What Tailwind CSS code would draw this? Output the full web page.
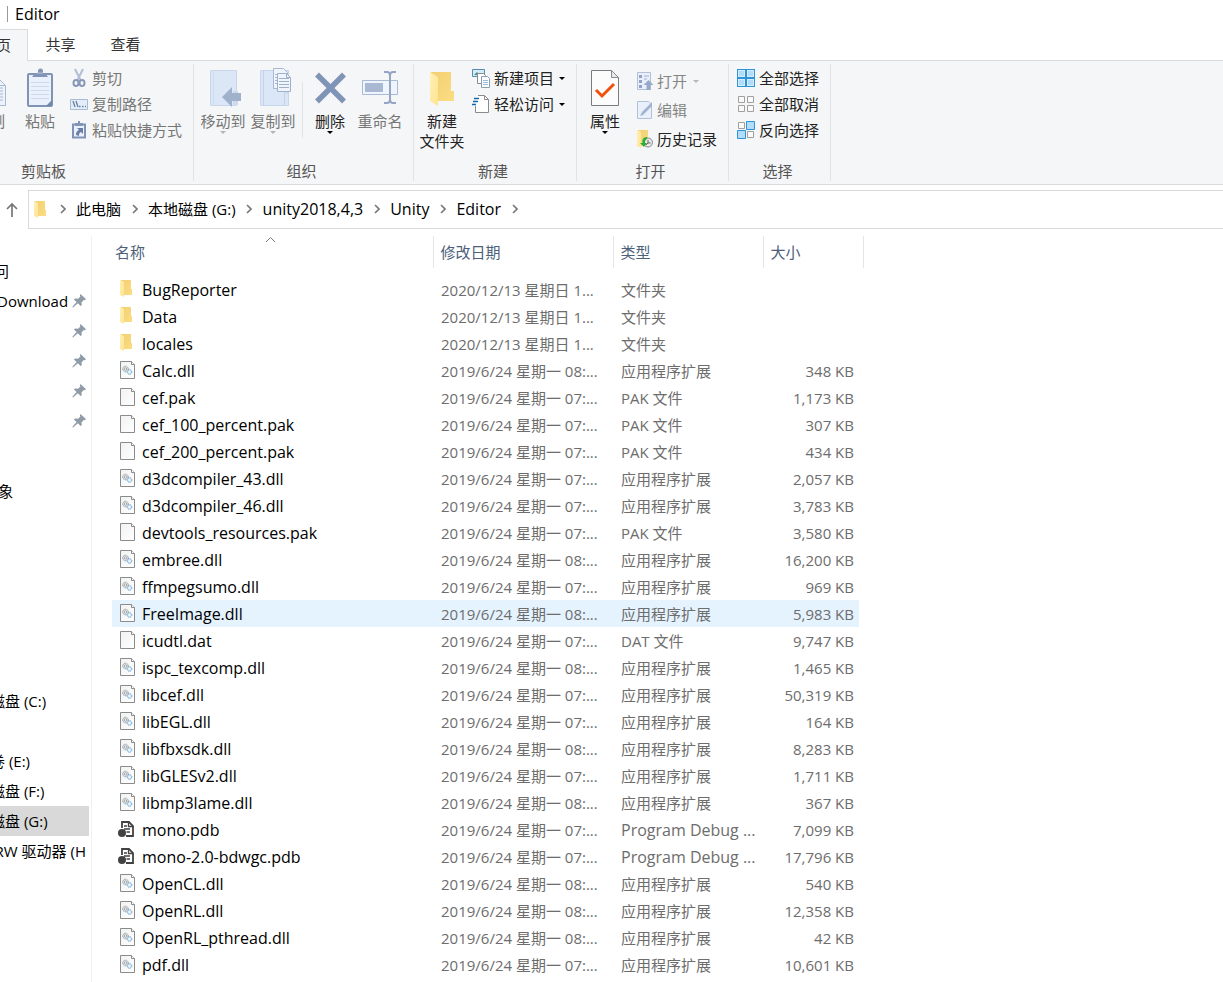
<!DOCTYPE html>
<html lang="zh-CN">

<head>
    <meta charset="UTF-8">
    <meta name="viewport" content="width=device-width, initial-scale=1.0">
    <title>Editor</title>
    <script src="https://cdn.jsdelivr.net/npm/@tailwindcss/browser@4"></script>
</head>

<body class="bg-white text-black text-[15px] leading-5 font-['Open_Sans','Noto_Sans_CJK_SC',sans-serif] overflow-hidden">

    <!-- icons -->
    <svg class="absolute w-0 h-0" aria-hidden="true">
        <defs>
            <linearGradient id="gold" x1="0" x2="1" y1="0" y2="1">
                <stop offset="0" stop-color="#f3cf72" />
                <stop offset="1" stop-color="#fbdd83" />
            </linearGradient>
            <linearGradient id="flap" x1="0" x2="1" y1="0" y2="1">
                <stop offset="0" stop-color="#fff0b8" />
                <stop offset="1" stop-color="#ffe38f" />
            </linearGradient>
            <linearGradient id="paper" x1="0" x2="1" y1="0" y2="1">
                <stop offset="0" stop-color="#f1f2f2" />
                <stop offset="1" stop-color="#ffffff" />
            </linearGradient>
        </defs>
        <symbol id="folder" viewBox="0 0 12 17">
            <path d="M1 0h10v9h1v6H3z" fill="url(#gold)" />
            <path d="M0 0l4 2v15l-4-2z" fill="url(#flap)" />
        </symbol>
        <symbol id="file" viewBox="0 0 15 18">
            <path d="M.5.5h11l3 3v14H.5z" fill="url(#paper)" stroke="#8b8b8b" />
            <path d="M11.500 .5v3h3" fill="#fff" stroke="#8b8b8b" />
        </symbol>
        <symbol id="dll" viewBox="0 0 15 18">
            <path d="M.5.5h11l3 3v14H.5z" fill="url(#paper)" stroke="#8b8b8b" />
            <path d="M11.500 .5v3h3" fill="#fff" stroke="#8b8b8b" />
            <circle cx="5.500" cy="8" r="2.800" fill="#e4e6e8" stroke="#8f979d" stroke-dasharray="1.200 .6" />
            <circle cx="5.500" cy="8" r="1.200" fill="#fff" stroke="#8f979d" stroke-width=".8" />
            <circle cx="9.500" cy="11" r="2.300" fill="#d5eafa" stroke="#6fa3cf" stroke-dasharray="1.200 .5" />
            <circle cx="9.500" cy="11" r=".8" fill="#fff" />
        </symbol>
        <symbol id="pdb" viewBox="0 0 16 16">
            <path d="M4 7V1h7l4 4v10H8" fill="#fff" stroke="#424242" stroke-width="1.800" />
            <path d="M10.500 1v4.500H15M6 5h3M6 8h6M8.500 11h3.500" fill="none" stroke="#424242" stroke-width="1.300" />
            <circle cx="4" cy="12" r="4" fill="#424242" />
        </symbol>
        <symbol id="pin" viewBox="0 0 14 14">
            <path d="M8.500 0L14 5.200l-1.300 1-1-.2-2.200 2.400.3 2.700-1.200 1-2.700-2.800L1 13.600l-.8-.7 4.400-4.800L1.900 5.500l1.200-1 3 .2 2.300-2.300-.5-1.200z" fill="#8f9ba6" />
        </symbol>
        <symbol id="chevron" viewBox="0 0 6 10">
            <path d="M1 1l4 4-4 4" fill="none" stroke="#777" stroke-width="1.600" />
        </symbol>
        <symbol id="caret" viewBox="0 0 6 3">
            <path d="M0 0h6L3 3z" fill="currentColor" />
        </symbol>
    </svg>

    <div class="min-h-screen flex flex-col">
        <!-- title -->
        <header class="h-[29px] pb-0.5 flex items-center gap-[7px] pl-[7px] whitespace-nowrap">
            <span class="w-px h-4 bg-[#999]"></span>
            <h1 class="text-base">Editor</h1>
        </header>

        <!-- tabs -->
        <nav class="h-8 flex border-b border-[#dadbdc] text-[#333]">
            <button type="button" class="w-[68px] h-8 -ml-10 pr-4 pb-0.5 border border-b-0 border-[#dadbdc] bg-[#f5f6f7] text-right shrink-0">主页</button>
            <button type="button" class="w-[65px] pb-0.5 text-center">共享</button>
            <button type="button" class="w-[65px] pb-0.5 text-center">查看</button>
        </nav>

        <!-- ribbon -->
        <div class="h-[124px] flex py-[3px] bg-[#f5f6f7] border-b border-[#dadbdc] text-[#222] whitespace-nowrap overflow-hidden">
            <section class="w-[300px] -ml-[106px] shrink-0 flex flex-col border-r border-[#e2e3e4]">
                <div class="flex-1 flex justify-end pr-[11px] text-[#767676]">
                    <button type="button" class="w-[50px] flex flex-col items-center">
                        <svg class="w-8 h-[47px]" viewBox="0 0 32 47">
                            <path d="M2 9h16v23H2z" fill="#eef3fb" stroke="#a9b8d2" />
                            <path d="M14.500 15.500h11l6 6v20h-17z" fill="#eef3fb" stroke="#a9b8d2" />
                            <path d="M25.500 15.500v6h6M17 24h12M17 27h12M17 30h12M17 33h12M17 36h12" fill="none" stroke="#a9b8d2" />
                        </svg>
                        <span>复制</span>
                    </button>
                    <button type="button" class="w-[50px] flex flex-col items-center">
                        <svg class="w-[26px] h-[47px]" viewBox="0 0 26 47">
                            <rect x="1" y="10" width="24" height="32" rx="1" fill="#eaf1fc" stroke="#8193b5" stroke-width="2" />
                            <path d="M19 42h6V36z" fill="#7387ae" />
                            <path d="M4 18.500h18M4 22.500h18M4 26.500h18M4 30.500h18M4 34.500h18" stroke="#ccd9ee" />
                            <path d="M5 13l3-4h3V7a2.500 2.500 0 0 1 5 0v2h2l3 4z" fill="#8395b7" />
                            <path d="M10 9h6" stroke="#b8c5db" />
                        </svg>
                        <span>粘贴</span>
                    </button>
                    <div class="ml-[5px] pt-1 flex flex-col gap-1.5 text-left">
                        <button type="button" class="flex items-center gap-1">
                            <svg class="w-[18px] h-5" viewBox="0 0 18 20">
                                <path d="M5 1l6 12M13 1L7 13" fill="none" stroke="#b0bfd6" stroke-width="2" />
                                <ellipse cx="6" cy="15" rx="2.500" ry="3" fill="none" stroke="#8899b8" stroke-width="2" />
                                <ellipse cx="12" cy="15" rx="2.500" ry="3" fill="none" stroke="#8899b8" stroke-width="2" />
                            </svg>
                            剪切
                        </button>
                        <button type="button" class="flex items-center gap-1">
                            <svg class="w-[18px] h-5" viewBox="0 0 18 20">
                                <path d="M.5 5.500h17v10H.5z" fill="#e4edfa" stroke="#a9bad4" />
                                <path d="M3 7l2 6M6 7l2 6" stroke="#6b7fa6" stroke-width="1.300" />
                                <path d="M9 12.500h1.500M12 12.500h1.500M15 12.500h1" stroke="#6b7fa6" stroke-width="1.500" />
                            </svg>
                            复制路径
                        </button>
                        <button type="button" class="flex items-center gap-1">
                            <svg class="w-[18px] h-5" viewBox="0 0 18 20">
                                <path d="M3 4.500h12v13H3z" fill="#eaf1fc" stroke="#8193b5" stroke-width="2" />
                                <path d="M5 6V3h3V1h2v2h3v3z" fill="#8395b7" />
                                <path d="M7 8h6v6l-2-2c-2 1-2 2-2 4l-3-1c0-3 1-4 3-5z" fill="#6b7fa6" />
                            </svg>
                            粘贴快捷方式
                        </button>
                    </div>
                </div>
                <h2 class="text-center text-[#555]">剪贴板</h2>
            </section>

            <section class="w-[220px] shrink-0 flex flex-col border-r border-[#e2e3e4]">
                <div class="flex-1 flex pl-1 text-[#767676]">
                    <button type="button" class="w-[50px] flex flex-col items-center">
                        <svg class="w-9 h-[47px]" viewBox="0 0 36 47">
                            <path d="M5.500 6.500h26v35h-26z" fill="#dbe6f6" stroke="#c8d6ec" />
                            <path d="M8.500 7v34" stroke="#cfdcf0" />
                            <path d="M28 27h5v14h-5z" fill="#cedaee" />
                            <path d="M17 33l10-10v6h10v8H27v6z" fill="#a0b1cc" />
                        </svg>
                        <span>移动到</span>
                        <svg class="w-1.5 h-[3px] text-[#b5b5b5]"><use href="#caret" /></svg>
                    </button>
                    <button type="button" class="w-[50px] flex flex-col items-center">
                        <svg class="w-9 h-[47px]" viewBox="0 0 36 47">
                            <path d="M5.500 6.500h28v35h-28z" fill="#dbe6f6" stroke="#c8d6ec" />
                            <path d="M8.500 7v34M29.500 41V29h4" fill="none" stroke="#c3d1e8" />
                            <path d="M18.500 4.500h10l4 4v16h-14z" fill="#f0f5fd" stroke="#a9b8d2" />
                            <path d="M20 10.500h8M20 13.500h8M20 16.500h8M20 19.500h3" stroke="#a9b8d2" />
                            <path d="M22.500 9.500h9l4 4v14h-13z" fill="#f0f5fd" stroke="#9fb0cb" />
                            <path d="M24 14.500h10M24 17.500h10M24 20.500h10M24 23.500h10M31.500 9.500v4h4" fill="none" stroke="#9fb0cb" />
                        </svg>
                        <span>复制到</span>
                        <svg class="w-1.5 h-[3px] text-[#b5b5b5]"><use href="#caret" /></svg>
                    </button>
                    <span class="w-px h-14 mt-[18px] ml-1 mr-0.5 bg-[#e2e3e4]"></span>
                    <button type="button" class="w-[50px] flex flex-col items-center text-[#222]">
                        <svg class="w-8 h-[47px]" viewBox="0 0 32 47">
                            <path d="M3 10.500l27 27M30 10.500l-27 27" stroke="#8094b8" stroke-width="5.500" />
                        </svg>
                        <span>删除</span>
                        <svg class="w-1.5 h-[3px] text-black"><use href="#caret" /></svg>
                    </button>
                    <button type="button" class="w-[50px] flex flex-col items-center">
                        <svg class="w-9 h-[47px]" viewBox="0 0 36 47">
                            <path d="M.5 16.500h35v14H.5z" fill="#f0f5fd" stroke="#a9bad4" />
                            <path d="M3 19h18v9H3z" fill="#a9b9d4" />
                            <path d="M22 8h3q3 0 3 4v23q0 4-3 4h-3M34 8h-3q-3 0-3 4v23q0 4 3 4h3" fill="none" stroke="#94a6c4" stroke-width="2" />
                        </svg>
                        <span>重命名</span>
                    </button>
                </div>
                <h2 class="text-center text-[#555] pr-1">组织</h2>
            </section>

            <section class="w-[163px] shrink-0 flex flex-col border-r border-[#e2e3e4]">
                <div class="flex-1 flex pl-[3px]">
                    <button type="button" class="w-[50px] flex flex-col items-center">
                        <svg class="w-6 h-[47px]" viewBox="0 0 24 47">
                            <path d="M1 8h20v19h3v10H7z" fill="url(#gold)" />
                            <path d="M0 8l8 5v29l-8-5z" fill="url(#flap)" />
                        </svg>
                        <span>新建<br>文件夹</span>
                    </button>
                    <div class="ml-[5px] pt-1 flex flex-col gap-1.5 self-start">
                        <button type="button" class="flex items-center gap-1">
                            <svg class="w-[18px] h-5" viewBox="0 0 18 20">
                                <path d="M.5 1.500h12v7H.5z" fill="#d4ebfa" stroke="#588caf" />
                                <path d="M2 7l3-3 3 3z" fill="#4e9177" />
                                <path d="M5.500 5.500h6l2 2v8h-8z" fill="#fff" stroke="#8b8b8b" />
                                <path d="M9.500 8.500h6l2 2v9h-8z" fill="#fff" stroke="#8b9db0" />
                                <path d="M11 12.500h5M11 14.500h5M11 16.500h5" stroke="#93bce0" />
                            </svg>
                            新建项目
                            <svg class="w-1.5 h-[3px] ml-px text-black"><use href="#caret" /></svg>
                        </button>
                        <button type="button" class="flex items-center gap-1">
                            <svg class="w-[18px] h-5" viewBox="0 0 18 20">
                                <path d="M4.500 1.500h8l4 4v13h-13V8z" fill="#fff" />
                                <path d="M6 1.500h6.500l4 4v13h-13V12M12.500 1.500v4h4" fill="none" stroke="#8b8b8b" />
                                <path d="M2 4.500h5M1 7.500h5M0 10.500h4" stroke="#1764b0" stroke-width="1.400" />
                            </svg>
                            轻松访问
                            <svg class="w-1.5 h-[3px] ml-px text-black"><use href="#caret" /></svg>
                        </button>
                    </div>
                </div>
                <h2 class="text-center text-[#555] pr-1">新建</h2>
            </section>

            <section class="w-[152px] shrink-0 flex flex-col border-r border-[#e2e3e4]">
                <div class="flex-1 flex pl-[3px]">
                    <button type="button" class="w-[50px] flex flex-col items-center">
                        <svg class="w-7 h-[47px]" viewBox="0 0 28 47">
                            <path d="M.5 6.500h20l7 7v28H.5z" fill="#fcfcfc" stroke="#7b7b7b" />
                            <path d="M20.500 6.500v7h7z" fill="#e9e9e9" stroke="#8b8b8b" />
                            <path d="M5 26l6 6 12-12" fill="none" stroke="#f1500d" stroke-width="3" />
                        </svg>
                        <span>属性</span>
                        <svg class="w-1.5 h-[3px] text-black"><use href="#caret" /></svg>
                    </button>
                    <div class="ml-[7px] pt-[7px] flex flex-col gap-[9px] self-start">
                        <button type="button" class="flex items-center gap-1 text-[#858585]">
                            <svg class="w-4 h-5" viewBox="0 0 16 20">
                                <path d="M.5 1.500h13v17H.5z" fill="#e9f0fb" stroke="#b2c1da" />
                                <path d="M2 4h3v3H2zM2 9h3v3H2zM2 14h3v3H2z" fill="#8fa3c5" />
                                <path d="M7 5h5M7 8h3" stroke="#9fb0cb" />
                                <path d="M11.500 9l5 5h-3v5h-4v-5h-3z" fill="#97a9c8" />
                            </svg>
                            打开
                            <svg class="w-1.5 h-[3px] ml-0.5 text-[#b5b5b5]"><use href="#caret" /></svg>
                        </button>
                        <button type="button" class="flex items-center gap-1 text-[#858585]">
                            <svg class="w-4 h-5" viewBox="0 0 16 20">
                                <path d="M.5 1.500h11l3 3v14H.5z" fill="#e9f0fb" stroke="#b2c1da" />
                                <path d="M3 16l2-4L15 2v4L6 15z" fill="#a2b3d0" />
                            </svg>
                            编辑
                        </button>
                        <button type="button" class="flex items-center gap-1">
                            <svg class="w-4 h-5" viewBox="0 0 16 20">
                                <path d="M1 1h10v16H3z" fill="url(#gold)" />
                                <path d="M0 1l4 2v16l-4-2z" fill="url(#flap)" />
                                <circle cx="11" cy="13.500" r="4.500" fill="#e8e8e8" stroke="#8a8a8a" />
                                <path d="M11 11v3h2.500M11 14l-2 2" fill="none" stroke="#666" />
                                <path d="M10 8c-4 0-5 3-4.500 6H3l4 4 3-4H8c0-2 0-3 2-4z" fill="#2fae35" />
                            </svg>
                            历史记录
                        </button>
                    </div>
                </div>
                <h2 class="text-center text-[#555] pr-1">打开</h2>
            </section>

            <section class="w-[102px] shrink-0 flex flex-col border-r border-[#e2e3e4]">
                <div class="flex-1 flex pl-2">
                    <div class="pt-1 flex flex-col gap-1.5 self-start">
                        <button type="button" class="flex items-center gap-1">
                            <svg class="w-[18px] h-5" viewBox="0 0 18 20">
                                <path d="M0 1h18v18H0z" fill="#2e94da" />
                                <path d="M1 2h7v7H1zM10 2h7v7h-7zM1 11h7v7H1zM10 11h7v7h-7z" fill="#d5ecfb" />
                                <path d="M2 3h5v5H2zM11 3h5v5h-5zM2 12h5v5H2zM11 12h5v5h-5z" fill="#b3dcf9" />
                            </svg>
                            全部选择
                        </button>
                        <button type="button" class="flex items-center gap-1">
                            <svg class="w-[18px] h-5" viewBox="0 0 18 20">
                                <path d="M1.500 2.500h6v6h-6zM10.500 2.500h6v6h-6zM1.500 11.500h6v6h-6zM10.500 11.500h6v6h-6z" fill="#fafafa" stroke="#a0a0a0" />
                            </svg>
                            全部取消
                        </button>
                        <button type="button" class="flex items-center gap-1">
                            <svg class="w-[18px] h-5" viewBox="0 0 18 20">
                                <path d="M1.500 2.500h6v6h-6zM10.500 11.500h6v6h-6z" fill="#fafafa" stroke="#a0a0a0" />
                                <path d="M9.500 1.500h8v8h-8zM.5 10.500h8v8h-8z" fill="#b3dcf9" stroke="#2e94da" />
                            </svg>
                            反向选择
                        </button>
                    </div>
                </div>
                <h2 class="text-center text-[#555] pr-1">选择</h2>
            </section>
        </div>

        <!-- address bar -->
        <div class="h-11 pt-[5px] flex items-center">
            <button type="button" aria-label="向上" class="w-7 pl-1.5">
                <svg class="w-3 h-4" viewBox="0 0 12 16">
                    <path d="M6 15V2M1 7l5-5 5 5" fill="none" stroke="#777" stroke-width="1.700" />
                </svg>
            </button>
            <nav id="path" class="flex-1 h-[39px] pl-[5px] pb-px flex items-center border border-r-0 border-[#d9d9d9] whitespace-nowrap">
                <svg class="w-3 h-[17px] mr-[3px]"><use href="#folder" /></svg>
            </nav>
        </div>

        <main class="flex-1 flex pt-[7px]">
            <!-- tree -->
            <aside class="w-[92px] shrink-0 pt-[20px] border-r border-[#f0f0f0] overflow-hidden whitespace-nowrap">
                <ul id="quick" class="-ml-[51px] mb-2.5"></ul>
                <ul id="tree" class="-ml-[51px]"></ul>
            </aside>

            <!-- files -->
            <div class="relative pl-5">
                <svg class="absolute top-0 left-[173px] w-[11px] h-[7px]" viewBox="0 0 11 7">
                    <path d="M1 6l4.500-4.500L10 6" fill="none" stroke="#777" />
                </svg>
                <table class="w-[751px] table-fixed border-collapse whitespace-nowrap text-[#6d6d6d]">
                    <colgroup>
                        <col class="w-[321px]">
                        <col class="w-[180px]">
                        <col class="w-[150px]">
                        <col class="w-24">
                        <col class="w-1">
                    </colgroup>
                    <thead class="text-[#4c607a] text-left">
                        <tr class="h-8">
                            <th class="p-0 pl-[3px] font-normal border-r border-[#e5e5e5]"><button type="button">名称</button></th>
                            <th class="p-0 pl-[7px] font-normal border-r border-[#e5e5e5]"><button type="button">修改日期</button></th>
                            <th class="p-0 pl-[7px] font-normal border-r border-[#e5e5e5]"><button type="button">类型</button></th>
                            <th colspan="2" class="p-0 pl-[7px] font-normal border-r border-[#e5e5e5]"><button type="button">大小</button></th>
                        </tr>
                    </thead>
                    <tbody id="files">
                        <tr class="h-2"></tr>
                    </tbody>
                </table>
            </div>
        </main>
    </div>

    <script>
        const path = ['此电脑', '本地磁盘 (G:)', 'unity2018,4,3', 'Unity', 'Editor']
        const chevron = '<span class="w-[27px] flex justify-center"><svg class="w-1.5 h-2.5"><use href="#chevron" /></svg></span>'
        document.getElementById('path').insertAdjacentHTML('beforeend',
            chevron + path.map(name => `<a href="#" class="${/^\w/.test(name) ? 'text-base leading-5' : ''}">${name}</a>${chevron}`).join(''))

        // the tree is scrolled to the right, so the names start outside of the pane
        const pin = '<svg class="absolute right-[5px] top-2 w-[14px] h-[14px]"><use href="#pin" /></svg>'
        document.getElementById('quick').innerHTML = ['快速访问', 'Download', '', '', '', ''].map((name, i) =>
            `<li class="relative h-[30px]"><a href="#" aria-label="${name || '固定的文件夹'}" class="block leading-[30px] ${i ? 'pl-12' : ''}">${name}</a>${i ? pin : ''}</li>`).join('')

        const drives = ['', '3D 对象', '', '', '', '', '', '', '本地磁盘 (C:)', '', '新加卷 (E:)', '本地磁盘 (F:)', '本地磁盘 (G:)', 'DVD RW 驱动器 (H']
        document.getElementById('tree').innerHTML = drives.map(name =>
            `<li class="h-[30px] pl-[11px] mr-0.5 leading-[30px] overflow-hidden ${name.includes('G:') ? 'bg-[#d9d9d9]' : ''}">${name ? `<a href="#">${name}</a>` : ''}</li>`).join('')

        const types = {
            folder: '文件夹',
            dll: '应用程序扩展',
            pak: 'PAK 文件',
            dat: 'DAT 文件',
            pdb: 'Program Debug ...',
        }

        const icons = {
            folder: '<svg class="w-3 h-[17px] mr-[3px] mb-0.5"><use href="#folder" /></svg>',
            dll: '<svg class="w-[15px] h-[18px] mb-0.5"><use href="#dll" /></svg>',
            pak: '<svg class="w-[15px] h-[18px] mb-0.5"><use href="#file" /></svg>',
            dat: '<svg class="w-[15px] h-[18px] mb-0.5"><use href="#file" /></svg>',
            pdb: '<svg class="w-4 h-4 -ml-0.5 mr-px mb-0.5"><use href="#pdb" /></svg>',
        }

        const files = [
            ['BugReporter', '', ''],
            ['Data', '', ''],
            ['locales', '', ''],
            ['Calc.dll', '08', '348'],
            ['cef.pak', '07', '1,173'],
            ['cef_100_percent.pak', '07', '307'],
            ['cef_200_percent.pak', '07', '434'],
            ['d3dcompiler_43.dll', '07', '2,057'],
            ['d3dcompiler_46.dll', '07', '3,783'],
            ['devtools_resources.pak', '07', '3,580'],
            ['embree.dll', '08', '16,200'],
            ['ffmpegsumo.dll', '07', '969'],
            ['FreeImage.dll', '08', '5,983'],
            ['icudtl.dat', '07', '9,747'],
            ['ispc_texcomp.dll', '08', '1,465'],
            ['libcef.dll', '07', '50,319'],
            ['libEGL.dll', '07', '164'],
            ['libfbxsdk.dll', '08', '8,283'],
            ['libGLESv2.dll', '07', '1,711'],
            ['libmp3lame.dll', '08', '367'],
            ['mono.pdb', '07', '7,099'],
            ['mono-2.0-bdwgc.pdb', '07', '17,796'],
            ['OpenCL.dll', '08', '540'],
            ['OpenRL.dll', '08', '12,358'],
            ['OpenRL_pthread.dll', '08', '42'],
            ['pdf.dll', '07', '10,601'],
        ]

        document.getElementById('files').insertAdjacentHTML('beforeend', files.map(([name, hour, size]) => {
            const kind = size ? name.split('.').pop() : 'folder'
            const date = size ? `2019/6/24 星期一 ${hour}:...` : '2020/12/13 星期日 1...'
            const bg = name === 'FreeImage.dll' ? 'bg-[#e5f3ff]' : ''
            return `<tr class="h-[27px]">
                <td class="p-0 pl-2 ${bg}"><div class="flex items-center gap-[7px] text-black text-base leading-5">${icons[kind]}<span>${name}</span></div></td>
                <td class="p-0 pl-2 ${bg}">${date}</td>
                <td class="p-0 pl-2 ${bg} ${kind === 'pdb' ? 'text-base leading-5' : ''}">${types[kind]}</td>
                <td class="p-0 pr-[5px] text-right ${bg}">${size ? size + ' KB' : ''}</td>
                <td class="p-0"></td>
            </tr>`
        }).join(''))
    </script>
</body>

</html>
